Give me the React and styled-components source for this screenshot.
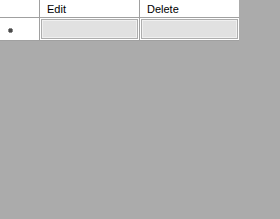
import styled, { createGlobalStyle } from "styled-components";

const GlobalStyle = createGlobalStyle`
  html, body {
    margin: 0;
    padding: 0;
    background: #ababab;
  }
  body {
    font-family: "Liberation Sans", Arial, sans-serif;
    font-size: 11px;
  }
`;

export default function App() {
  const columns = ["Edit", "Delete"];
  return (
    <Workspace>
      <GlobalStyle />
      <Grid>
        <HeaderCell />
        {columns.map((name) => (
          <HeaderCell key={name}>{name}</HeaderCell>
        ))}
        <RowHeader>
          <NewRowMark viewBox="0 0 5 5">
            <path d="M1 0h3v1h1v3h-1v1h-3v-1h-1v-3h1z" fill="#8a8a8a" />
            <rect x="1" y="1" width="3" height="3" fill="#4a4a4a" />
          </NewRowMark>
        </RowHeader>
        {columns.map((name) => (
          <ButtonCell key={name}>
            <CellButton />
          </ButtonCell>
        ))}
      </Grid>
    </Workspace>
  );
}

const Workspace = styled.div`
  width: 280px;
  height: 219px;
  background: #ababab;
`;

const Grid = styled.div`
  display: grid;
  grid-template-columns: 39px 99px 99px;
  grid-template-rows: 17px 22px;
  gap: 1px;
  width: 238px;
  padding: 0 1px 1px 0;
  background: #a0a0a0;
`;

const HeaderCell = styled.div`
  background: #ffffff;
  color: #000000;
  padding: 1px 0 0 7px;
  display: flex;
  align-items: center;
  font-size: 11px;
  line-height: 1;
`;

const RowHeader = styled.div`
  background: #ffffff;
  display: flex;
  align-items: center;
  padding: 3px 0 0 8px;
`;

const NewRowMark = styled.svg`
  width: 5px;
  height: 5px;
  shape-rendering: crispEdges;
`;

const ButtonCell = styled.div`
  background: #ffffff;
  padding: 1px;
  display: flex;
`;

const CellButton = styled.div`
  flex: 1;
  background: #e1e1e1;
  border: 1px solid #adadad;
  box-shadow: inset 0 0 0 1px #f0f0f0;
`;
